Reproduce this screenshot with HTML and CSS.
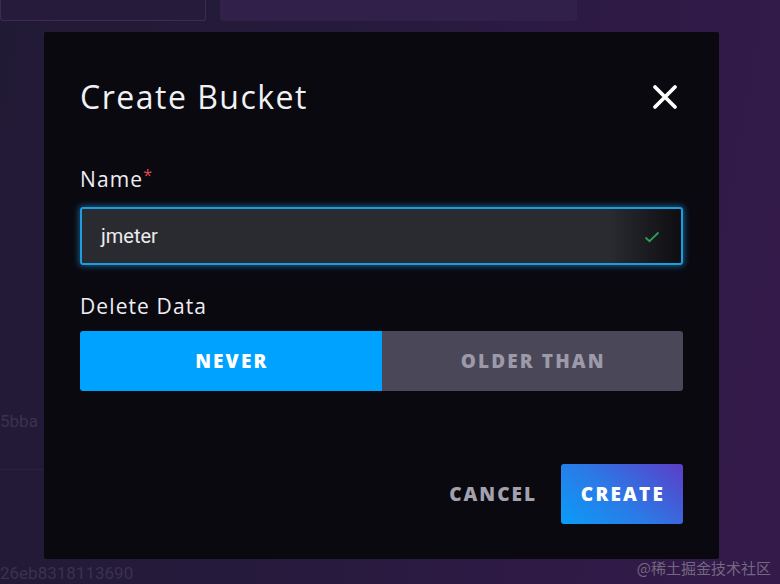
FILE: index.html
```html
<!DOCTYPE html>
<html>
<head>
<meta charset="utf-8">
<link rel="stylesheet" href="styles.css">
</head>
<body>
<div class="app">
  <div class="top-row">
    <div class="card card-a"></div>
    <div class="card card-b"></div>
  </div>
  <div class="bg-id bg-id-1">5bba</div>
  <div class="bg-line"></div>
  <div class="bg-id bg-id-2">26eb8318113690</div>
</div>

<div class="modal">
  <div class="modal-head">
    <h1 class="modal-title">Create Bucket</h1>
    <button class="close-btn" aria-label="Close">
      <svg width="26" height="26" viewBox="0 0 26 26"><path d="M3 3 L23 23 M23 3 L3 23" stroke="#fff" stroke-width="3.8" stroke-linecap="round"/></svg>
    </button>
  </div>
  <label class="field-label">Name<span class="req">*</span></label>
  <div class="input-wrap">
    <span class="input-text">jmeter</span>
    <svg class="check" width="16" height="12" viewBox="0 0 16 12"><path d="M1.5 6.5 L5.5 10.2 L14.5 1.5" fill="none" stroke="#2f9e55" stroke-width="1.8"/></svg>
  </div>
  <label class="field-label label-2">Delete Data</label>
  <div class="toggle">
    <div class="toggle-opt active">NEVER</div>
    <div class="toggle-opt">OLDER THAN</div>
  </div>
  <div class="modal-foot">
    <button class="btn-cancel">CANCEL</button>
    <button class="btn-create">CREATE</button>
  </div>
</div>

<div class="watermark">@稀土掘金技术社区</div>
</body>
</html>
```

FILE: styles.css
```css
* { box-sizing: border-box; }
html, body { margin: 0; padding: 0; }
body {
  width: 780px;
  height: 584px;
  overflow: hidden;
  position: relative;
  background: linear-gradient(100deg, #211a35 0%, #261a3c 40%, #2e1a45 70%, #341a4b 100%);
  font-family: "Open Sans", sans-serif;
}
.app { height: 584px; display: flex; flex-direction: column; }
.top-row { display: flex; gap: 14px; height: 22px; }
.card { height: 21px; border-radius: 0 0 3px 3px; }
.card-a { width: 206px; border: 1px solid #3a2c52; border-top: none; background: #261b3b; }
.card-b { width: 357px; background: #31204a; }
.bg-id { color: #3b3150; font-family: "Roboto", sans-serif; font-size: 17px; line-height: 20px; }
.bg-id-1 { margin-top: 389px; }
.bg-line { height: 1px; background: #2a2040; margin-top: 38px; width: 44px; }
.bg-id-2 { margin-top: 93px; }

.modal {
  position: absolute;
  left: 44px;
  top: 32px;
  width: 675px;
  height: 527px;
  background: #0a0910;
  border-radius: 2px;
  padding: 0 36px;
  display: flex;
  flex-direction: column;
}
.modal-head {
  display: flex;
  justify-content: space-between;
  align-items: center;
  height: 135px;
  padding-bottom: 6px;
}
.modal-title {
  margin: 0;
  font-weight: 400;
  font-size: 32px;
  color: #f1f1f4;
  letter-spacing: 1.5px;
}
.close-btn {
  background: none; border: none; padding: 0; margin-right: 5px;
  width: 26px; height: 26px; display: flex;
}
.field-label {
  font-size: 21px;
  color: #eeeef2;
  line-height: 24px;
  display: block;
  letter-spacing: 1.1px;
}
.req { color: #e0484f; font-size: 16px; vertical-align: top; line-height: 16px; letter-spacing: 0; }
.input-wrap {
  margin-top: 16px;
  height: 58px;
  border: 2px solid #1f9be0;
  border-radius: 3px;
  box-shadow: 0 0 6px 1px rgba(31, 155, 224, 0.6);
  background: linear-gradient(90deg, #2a2b30 0%, #2a2b30 88%, #0d0d12 100%);
  display: flex;
  align-items: center;
  justify-content: space-between;
  padding: 0 21px 0 19px;
}
.input-text {
  font-family: "Roboto", sans-serif;
  font-size: 20px;
  color: #ececef;
}
.check { margin-top: 1px; }
.label-2 { margin-top: 29px; }
.toggle {
  margin-top: 13px;
  height: 60px;
  display: flex;
  border-radius: 3px;
  overflow: hidden;
}
.toggle-opt {
  flex: 1;
  display: flex;
  align-items: center;
  justify-content: center;
  background: #4a4858;
  color: #9c99a8;
  font-weight: 800;
  font-size: 19px;
  letter-spacing: 2.1px;
  padding-left: 2px;
}
.toggle-opt.active { background: #00a2ff; color: #fff; }
.modal-foot {
  margin-top: 73px;
  display: flex;
  justify-content: flex-end;
  align-items: center;
  gap: 24px;
}
.btn-cancel {
  background: none; border: none; padding: 0;
  font-family: "Open Sans", sans-serif;
  font-weight: 800;
  font-size: 19px;
  letter-spacing: 2px;
  color: #a3a1ad;
}
.btn-create {
  width: 122px; height: 60px;
  border: none; border-radius: 3px;
  padding: 0 0 0 2px;
  background: linear-gradient(40deg, #0a9cf8 0%, #2b7ae6 45%, #5b3ec8 100%);
  color: #fff;
  font-family: "Open Sans", sans-serif;
  font-weight: 800;
  font-size: 19px;
  letter-spacing: 2.2px;
}
.watermark {
  position: absolute;
  right: 9px;
  bottom: 6px;
  color: #8a8294;
  font-family: "Noto Sans CJK SC", sans-serif;
  font-size: 15px;
  opacity: 0.75;
}
```
